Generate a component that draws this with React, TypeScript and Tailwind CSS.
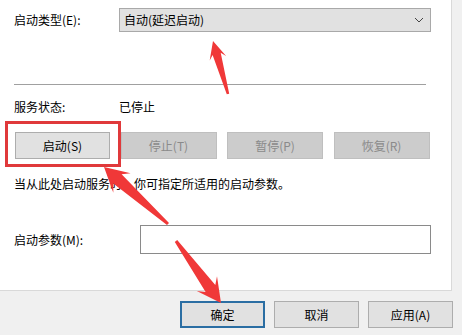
import React from "react";

type P = [number, number];

function arrowPoints(tail: P, tip: P, hl: number, hw: number, ws: number, w0: number): string {
  const dx = tip[0] - tail[0];
  const dy = tip[1] - tail[1];
  const len = Math.hypot(dx, dy);
  const ux = dx / len;
  const uy = dy / len;
  const nx = -uy;
  const ny = ux;
  const at = (d: number, s: number): P => [tip[0] - ux * d + nx * s, tip[1] - uy * d + ny * s];
  const pts: P[] = [
    [tail[0] + nx * w0, tail[1] + ny * w0],
    at(hl * 0.75, ws),
    at(hl, hw),
    tip,
    at(hl, -hw),
    at(hl * 0.75, -ws),
    [tail[0] - nx * w0, tail[1] - ny * w0],
  ];
  return pts.map((p) => `${p[0].toFixed(1)},${p[1].toFixed(1)}`).join(" ");
}

const font = { fontFamily: '"Noto Sans CJK SC", "Noto Sans", sans-serif' };

function Btn({ label, disabled, w = "w-[96px]" }: { label: string; disabled?: boolean; w?: string }) {
  return (
    <div
      className={
        `${w} h-[27px] flex items-center justify-center text-[12px] border ` +
        (disabled ? "bg-[#cccccc] border-[#bfbfbf] text-[#8a8a8a]" : "bg-[#e1e1e1] border-[#adadad] text-black")
      }
    >
      {label}
    </div>
  );
}

export default function App() {
  return (
    <div className="relative w-[462px] h-[335px] bg-[#f0f0f0] overflow-hidden text-black" style={font}>
      <div className="w-[452px] h-[291px] bg-white border-r border-b border-[#d9d9d9] flex flex-col pl-[14px] text-[12px] leading-[16px]">
        <div className="mt-[8px] flex items-center">
          <div className="w-[105px]">启动类型(E):</div>
          <div className="w-[312px] h-[24px] bg-[#e1e1e1] border border-[#a9a9a9] flex items-center justify-between pl-[4px] pr-[6px]">
            <span>自动(延迟启动)</span>
            <svg width="10" height="6" viewBox="0 0 10 6">
              <path d="M1 1 L5 5 L9 1" fill="none" stroke="#444" strokeWidth="1" />
            </svg>
          </div>
        </div>
        <div className="mt-[52px] w-[412px] h-px bg-[#a0a0a0]" />
        <div className="mt-[14px] flex">
          <div className="w-[105px]">服务状态:</div>
          <div>已停止</div>
        </div>
        <div className="mt-[17px] ml-px flex gap-[10.5px]">
          <Btn label="启动(S)" w="w-[95px]" />
          <Btn label="停止(T)" disabled />
          <Btn label="暂停(P)" disabled />
          <Btn label="恢复(R)" disabled />
        </div>
        <div className="mt-[17px]">当从此处启动服务时，你可指定所适用的启动参数。</div>
        <div className="mt-[33px] flex items-center">
          <div className="w-[126px]">启动参数(M):</div>
          <div className="w-[291px] h-[29px] bg-white border border-[#8a8a8a]" />
        </div>
      </div>
      <div className="mt-[10px] flex justify-end gap-[9px] pr-[9px] text-[12px]">
        <div className="w-[85px] h-[27px] flex items-center justify-center bg-[#e1e1e1] border-2 border-[#2b6ea3]">确定</div>
        <Btn label="取消" w="w-[85px]" />
        <Btn label="应用(A)" w="w-[85px]" />
      </div>

      <div className="absolute left-[5px] top-[121px] w-[116px] h-[46px] border-[3px] border-[#e0393b]" />

      <svg className="absolute left-0 top-0 pointer-events-none" width="462" height="335" viewBox="0 0 462 335">
        <polygon points={arrowPoints([228, 94], [213, 41], 18, 8.5, 4.2, 1.2)} fill="#f03838" />
        <polygon points={arrowPoints([168, 224], [104, 167], 24, 13, 6.2, 1.5)} fill="#f03838" />
        <polygon points={arrowPoints([176, 241], [221, 303], 24, 12.5, 6, 1.5)} fill="#f03838" />
      </svg>
    </div>
  );
}
